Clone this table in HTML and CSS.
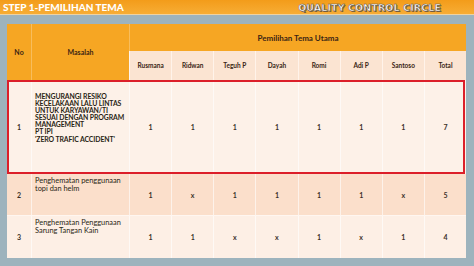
FILE: index.html
```html
<!DOCTYPE html>
<html>
<head>
<meta charset="utf-8">
<link rel="stylesheet" href="styles.css">
</head>
<body>
<div class="topbar">
  <span class="step">STEP 1-PEMILIHAN TEMA</span>
  <span class="qcc">QUALITY CONTROL CIRCLE</span>
</div>
<div class="table">
  <div class="head">
    <div class="h-no">No</div>
    <div class="h-mas">Masalah</div>
    <div class="h-group">Pemilihan Tema Utama</div>
    <div class="h-name first">Rusmana</div>
    <div class="h-name">Ridwan</div>
    <div class="h-name">Teguh P</div>
    <div class="h-name">Dayah</div>
    <div class="h-name">Romi</div>
    <div class="h-name">Adi P</div>
    <div class="h-name">Santoso</div>
    <div class="h-name">Total</div>
  </div>
  <div class="row r1">
    <div class="c no">1</div>
    <div class="c mas caps">MENGURANGI RESIKO<br>KECELAKAAN LALU LINTAS<br>UNTUK KARYAWAN/TI<br>SESUAI DENGAN PROGRAM<br>MANAGEMENT<br>PT IPI<br>'ZERO TRAFIC ACCIDENT'</div>
    <div class="c">1</div><div class="c">1</div><div class="c">1</div><div class="c">1</div>
    <div class="c">1</div><div class="c">1</div><div class="c">1</div><div class="c">7</div>
  </div>
  <div class="row r2">
    <div class="c no">2</div>
    <div class="c mas">Penghematan penggunaan<br>topi dan helm</div>
    <div class="c">1</div><div class="c">x</div><div class="c">1</div><div class="c">1</div>
    <div class="c">1</div><div class="c">1</div><div class="c">x</div><div class="c">5</div>
  </div>
  <div class="row r3">
    <div class="c no">3</div>
    <div class="c mas">Penghematan Penggunaan<br>Sarung Tangan Kain</div>
    <div class="c">1</div><div class="c">1</div><div class="c">x</div><div class="c">x</div>
    <div class="c">1</div><div class="c">x</div><div class="c">1</div><div class="c">4</div>
  </div>
</div>
</body>
</html>
```
FILE: styles.css
```css
* { box-sizing: border-box; }
html, body { margin: 0; padding: 0; }
body {
  width: 474px;
  height: 266px;
  overflow: hidden;
  background: #9db3bd;
  font-family: Lato, "Liberation Sans", sans-serif;
  color: #2a1f14;
}
.topbar {
  height: 15px;
  background: linear-gradient(#f39c1a, #f7ad35);
  border-bottom: 1px solid #efd2a0;
  display: flex;
  align-items: center;
  justify-content: space-between;
  padding: 0 33px 0 3px;
}
.step {
  color: #fff;
  font-weight: 900;
  font-size: 10px;
  letter-spacing: 0;
}
.qcc {
  color: #fff;
  font-family: "DejaVu Sans", sans-serif;
  font-weight: bold;
  font-size: 9.5px;
  letter-spacing: 0.1px;
  -webkit-text-stroke: 0.5px #5a5040;
  text-shadow: 1px 1px 0 #7a6040;
}
.table {
  margin: 9px 8px 0 7px;
}
.head, .row {
  display: grid;
  grid-template-columns: 24px 98px repeat(8, 1fr);
}
.head {
  grid-template-rows: 27px 29px;
  background: #f6a623;
  font-weight: bold;
  color: #3a2414;
}
.head > div {
  display: flex;
  align-items: center;
  justify-content: center;
}
.h-no { grid-row: 1 / 3; grid-column: 1; font-size: 7px; }
.h-mas { grid-row: 1 / 3; grid-column: 2; font-size: 7px; border-left: 1px solid #f8bd5c; }
.h-group { grid-row: 1; grid-column: 3 / 11; font-size: 8px; border-left: 1px solid #f8bd5c; }
.h-name {
  grid-row: 2;
  background: #fbe4d2;
  font-size: 6.5px;
  border-left: 1px solid #fff3ea;
}
.row { position: relative; }
.r1 { height: 94px; background: #fdf1e8; }
.r2 { height: 41px; background: #fbdfcb; }
.r3 { height: 43px; background: #fdefe5; border-top: 1px solid #fff6f0; }
.r1::after {
  content: "";
  position: absolute;
  inset: 0 1px 0 0;
  border: 2px solid #dc1f2a;
}
.c {
  display: flex;
  align-items: center;
  justify-content: center;
  font-size: 7px;
  font-weight: bold;
  color: #3a3028;
  border-left: 1px solid rgba(255, 255, 255, 0.6);
}
.c.no { border-left: none; }
.c.mas {
  display: block;
  text-align: left;
  padding: 3px 0 0 3px;
  font-size: 7.4px;
  font-weight: normal;
  color: #2a1f14;
  line-height: 8px;
  white-space: nowrap;
}
.c.mas.caps {
  padding-top: 13px;
  font-weight: bold;
  font-size: 6.9px;
  line-height: 7.1px;
  letter-spacing: -0.1px;
}
```
